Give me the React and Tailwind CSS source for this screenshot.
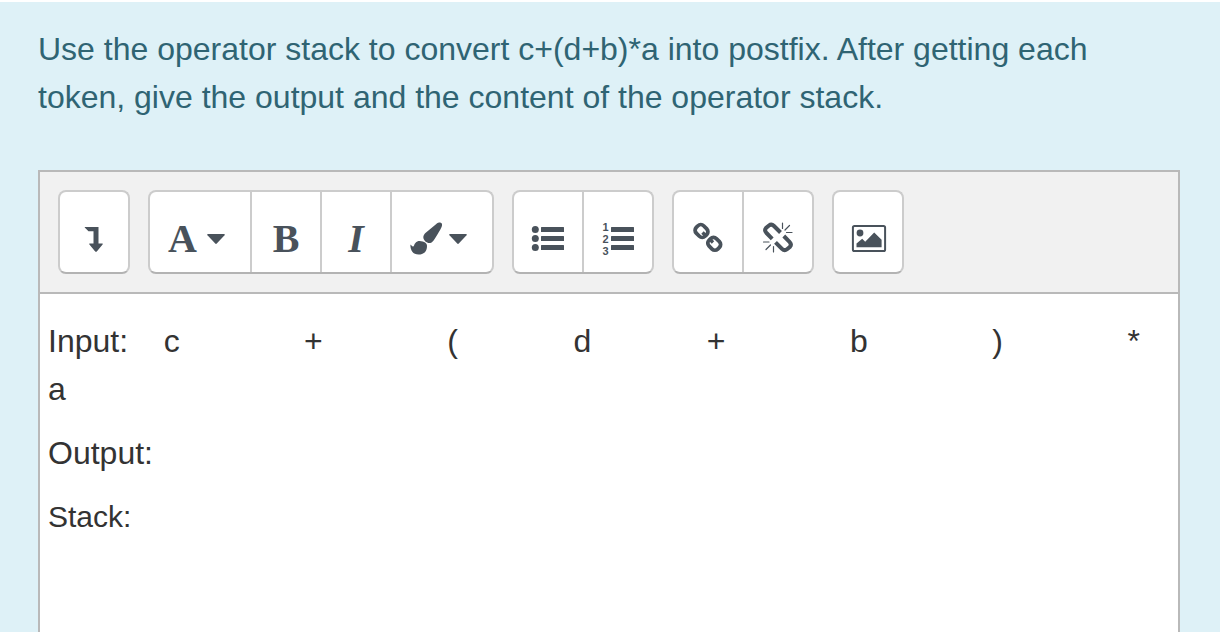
const ink = "#49525b";

function LevelDown() {
  return (
    <svg width="40" height="40" viewBox="0 0 40 40" fill={ink} aria-hidden="true">
      <path d="M11 9H24.5V25.5H28.2Q29.4 25.6 28.6 26.6L22.8 33.4Q22 34.3 21.2 33.4L15.4 26.6Q14.6 25.6 15.8 25.5H19.5V13.2H15Q14.4 13.2 14 12.7L10.7 9.6Q10.5 9 11 9Z" />
    </svg>
  );
}

function Caret() {
  return (
    <svg width="18" height="40" viewBox="0 0 18 40" fill={ink} aria-hidden="true">
      <path d="M1 16H17Q18.4 16.2 17.5 17.3L9.8 25.6Q9 26.4 8.2 25.6L0.5 17.3Q-0.4 16.2 1 16Z" />
    </svg>
  );
}

function Brush() {
  return (
    <svg width="36" height="40" viewBox="0 0 36 40" fill={ink} aria-hidden="true">
      <path d="M29 4.6C31 4 32.4 5.4 32 7.4C31.8 9 30.6 11.2 29 13.8C27.4 16.6 25.4 20 23.6 22.4C22.4 24 21 25 19 25C17 25 13.4 22.6 13.3 19.2C13.3 17.4 14.4 16 16 14.5L26 6.2C27.2 5.3 28 4.9 29 4.6Z" />
      <path d="M0.4 26.6C1 26.8 2 28.6 3 28.6C4.2 28.4 4 26.4 5.4 25C6.6 23.6 8 23 9.6 23C11.6 23 14 23.8 15.4 24.8C16.6 25.8 17 26.6 17 28.2C17 33.4 13.6 36.6 8.6 36.6C3 36.6 0.2 32.6 0.4 26.6Z" />
    </svg>
  );
}

function BulletList() {
  return (
    <svg width="40" height="40" viewBox="0 0 40 40" fill={ink} aria-hidden="true">
      <circle cx="7.3" cy="11.4" r="3.5" />
      <circle cx="7.3" cy="20.5" r="3.5" />
      <circle cx="7.3" cy="29.6" r="3.5" />
      <rect x="13" y="9" width="23" height="5" rx="0.6" />
      <rect x="13" y="18" width="23" height="5" rx="0.6" />
      <rect x="13" y="27" width="23" height="5" rx="0.6" />
    </svg>
  );
}

function NumberList() {
  return (
    <svg width="40" height="40" viewBox="0 0 40 40" fill={ink} aria-hidden="true">
      <g fontFamily="Liberation Sans, sans-serif" fontWeight="700" fontSize="11" textAnchor="middle">
        <text x="7.5" y="13">1</text>
        <text x="7.5" y="25">2</text>
        <text x="7.5" y="37">3</text>
      </g>
      <rect x="13" y="9" width="23" height="5" rx="0.6" />
      <rect x="13" y="18" width="23" height="5" rx="0.6" />
      <rect x="13" y="27" width="23" height="5" rx="0.6" />
    </svg>
  );
}

function Chain() {
  return (
    <svg width="40" height="40" viewBox="0 0 40 40" fill="none" stroke={ink} strokeWidth="3.8" aria-hidden="true">
      <rect x="7.3" y="7.8" width="12.4" height="10.4" rx="4" transform="rotate(45 13.5 13)" />
      <rect x="20" y="20.6" width="12.4" height="10.4" rx="4" transform="rotate(45 26.2 25.8)" />
      <path d="M14.5 14.5L17 17M22.5 22L25 24.5" strokeWidth="3.4" />
    </svg>
  );
}

function BrokenChain() {
  return (
    <svg width="40" height="40" viewBox="0 0 40 40" fill="none" stroke={ink} strokeWidth="4" aria-hidden="true">
      <path d="M14.2 20.8L8.5 15Q6 12.5 8 10L11 7.5Q13.5 5.5 16 8L22.5 14.5" />
      <path d="M25.8 18L31.5 23.8Q34 26.3 32 28.8L29 31.3Q26.5 33.3 24 30.8L17.5 24.3" />
      <g strokeWidth="1.2" strokeLinecap="round">
        <path d="M24.5 5V10.5M31.5 7.5L27 12M34 14.5H28.5M5.5 24H11M8 31.5L12.5 27M15.5 28.5V34" />
      </g>
    </svg>
  );
}

function Picture() {
  return (
    <svg width="40" height="40" viewBox="0 0 40 40" fill={ink} aria-hidden="true">
      <rect x="4.9" y="7.9" width="32.2" height="25.2" rx="1.6" fill="none" stroke={ink} strokeWidth="2" />
      <circle cx="12" cy="15" r="3.4" />
      <path d="M8.5 29.3V25.5L14.2 20.8L17.2 23.8L26.2 14.5L33.6 21.8V29.3Z" />
    </svg>
  );
}

function Group({ children }) {
  return (
    <div className="flex h-[84px] divide-x-2 divide-[#cccccc] overflow-hidden rounded-lg border-2 border-[#cccccc] border-b-[#b3b3b3] bg-white">
      {children}
    </div>
  );
}

function Tool({ label, children }) {
  return (
    <button type="button" aria-label={label} title={label} className="box-content flex w-[68px] items-center justify-center pt-3">
      {children}
    </button>
  );
}

function MenuTool({ label, children }) {
  return (
    <button
      type="button"
      aria-label={label}
      title={label}
      aria-haspopup="menu"
      className="box-content flex w-[82px] items-center gap-[3px] pt-3 pl-[18px]"
    >
      {children}
      <Caret />
    </button>
  );
}

const glyph = "pt-[2px] font-['Liberation_Serif',serif] text-[40px] leading-10 font-bold text-[#49525b]";

const gap = (n) => " ".repeat(n);
const inputLine =
  "Input:" + gap(4) + "c" + gap(14) + "+" + gap(14) + "(" + gap(13) + "d" + gap(13) + "+" + gap(14) + "b" + gap(14) + ")" + gap(14) + "*" + gap(3) + "a";

export default function App() {
  return (
    <div className="min-h-screen bg-white pt-[2px] pr-[6px] font-['Liberation_Sans',Arial,sans-serif] text-[32px] leading-[48px]">
      <main className="flex min-h-[calc(100vh-2px)] flex-col bg-[#def1f7] pt-[23px] pr-10 pl-[38px]">
        <p id="question" className="text-[#2f6473]">
          Use the operator stack to convert c+(d+b)*a into postfix. After getting each token, give the output and the content of the operator stack.
        </p>
        <section className="mt-[49px] flex grow flex-col border-2 border-b-0 border-[#b9b9b9] bg-white">
          <div role="toolbar" aria-label="Editor" className="flex flex-wrap gap-[18px] border-b-2 border-[#b9b9b9] bg-[#f1f1f1] p-[18px]">
            <Group>
              <Tool label="Show more buttons"><LevelDown /></Tool>
            </Group>
            <Group>
              <MenuTool label="Paragraph styles"><span className={"w-9 text-left " + glyph}>A</span></MenuTool>
              <Tool label="Bold"><span className={glyph}>B</span></Tool>
              <Tool label="Italic"><span className={"italic " + glyph}>I</span></Tool>
              <MenuTool label="Font colour"><Brush /></MenuTool>
            </Group>
            <Group>
              <Tool label="Unordered list"><BulletList /></Tool>
              <Tool label="Ordered list"><NumberList /></Tool>
            </Group>
            <Group>
              <Tool label="Link"><Chain /></Tool>
              <Tool label="Unlink"><BrokenChain /></Tool>
            </Group>
            <Group>
              <Tool label="Insert or edit image"><Picture /></Tool>
            </Group>
          </div>
          <div
            role="textbox"
            aria-multiline="true"
            aria-labelledby="question"
            contentEditable
            suppressContentEditableWarning
            className="grow space-y-4 px-2 pt-[23px] whitespace-pre-wrap text-[#333333] outline-none"
          >
            <p>{inputLine}</p>
            <p>Output:</p>
            <p className="text-[30px]">Stack:</p>
          </div>
        </section>
      </main>
    </div>
  );
}
